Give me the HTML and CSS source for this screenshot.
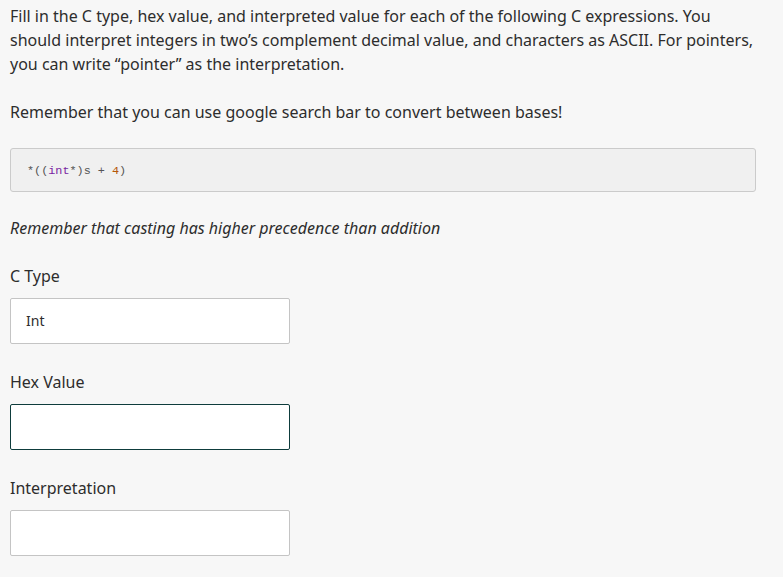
FILE: index.html
```html
<!DOCTYPE html>
<html>
<head>
<meta charset="utf-8">
<link rel="stylesheet" href="styles.css">
</head>
<body>
<div class="page">
  <p class="para">Fill in the C type, hex value, and interpreted value for each of the following C expressions. You should interpret integers in two’s complement decimal value, and characters as ASCII. For pointers, you can write “pointer” as the interpretation.</p>
  <p class="para">Remember that you can use google search bar to convert between bases!</p>
  <pre class="code"><span class="op">*((</span><span class="kw">int</span><span class="op">*)s + </span><span class="num">4</span><span class="op">)</span></pre>
  <p class="para note">Remember that casting has higher precedence than addition</p>
  <div class="field">
    <label class="label">C Type</label>
    <div class="input">Int</div>
  </div>
  <div class="field">
    <label class="label">Hex Value</label>
    <div class="input focused"></div>
  </div>
  <div class="field">
    <label class="label">Interpretation</label>
    <div class="input"></div>
  </div>
</div>
</body>
</html>
```
FILE: styles.css
```css
html, body {
  margin: 0;
  padding: 0;
  background: #f7f7f7;
}
.page {
  width: 746px;
  padding: 4px 0 0 10px;
  font-family: "Noto Sans", sans-serif;
  font-size: 16px;
  line-height: 24px;
  color: #2d2d2d;
}
.para {
  margin: 0 0 24px 0;
}
.note {
  font-style: italic;
}
.code {
  margin: 0 0 24px 0;
  box-sizing: border-box;
  height: 44px;
  padding: 15px 16px 0 16px;
  background: #f0f0f0;
  border: 1px solid #cbcbcb;
  border-radius: 3px;
  font-family: "Liberation Mono", monospace;
  font-size: 11.8px;
  line-height: 15px;
  color: #555555;
}
.kw { color: #7a1fa2; }
.num { color: #b5560a; }
.field {
  margin-bottom: 26px;
}
.label {
  display: block;
  line-height: 24px;
  margin-bottom: 10px;
}
.input {
  width: 280px;
  height: 46px;
  box-sizing: border-box;
  background: #ffffff;
  border: 1px solid #c4c4c4;
  border-radius: 2px;
  padding: 0 15px;
  font-size: 14px;
  line-height: 44px;
  color: #2d2d2d;
}
.input.focused {
  border-color: #0e3c3c;
}
```
